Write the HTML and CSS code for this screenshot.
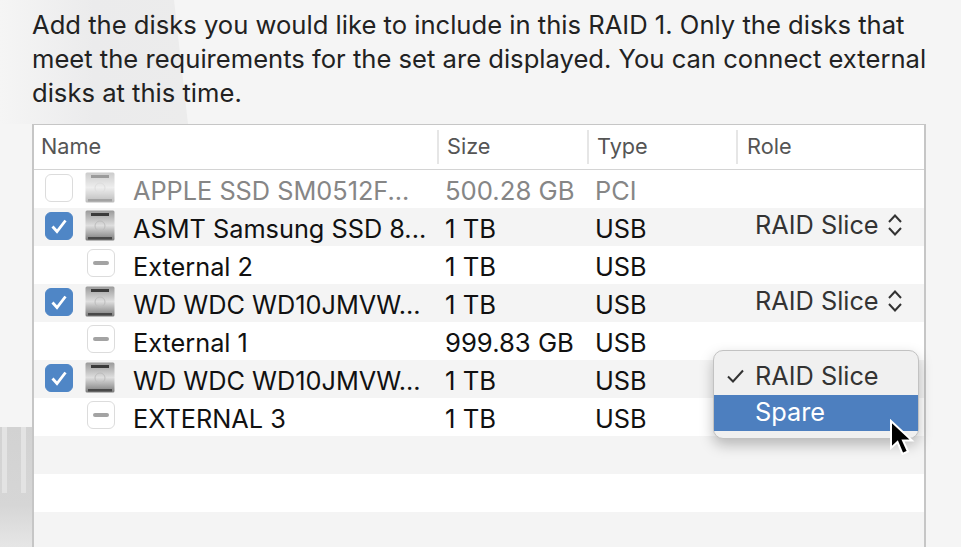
FILE: index.html
```html
<!DOCTYPE html>
<html lang="en">
<head>
    <meta charset="UTF-8">
    <title>RAID Assistant</title>
    <link rel="stylesheet" href="styles.css">
</head>
<body>
    <svg class="backdrop" width="961" height="547" viewBox="0 0 961 547">
        <defs>
            <linearGradient id="wedge" x1="0" y1="0" x2="1" y2="0">
                <stop offset="0" stop-color="#f5f5f5"/>
                <stop offset="0.5" stop-color="#ebebec"/>
                <stop offset="1" stop-color="#ececec"/>
            </linearGradient>
            <linearGradient id="stand" x1="0" y1="0" x2="0" y2="1">
                <stop offset="0" stop-color="#d2d2d2"/>
                <stop offset="0.65" stop-color="#d6d6d6"/>
                <stop offset="1" stop-color="#e6e6e6"/>
            </linearGradient>
            <linearGradient id="platter" x1="0" y1="0" x2="0" y2="1">
                <stop offset="0" stop-color="#9a9a9a"/>
                <stop offset="0.5" stop-color="#dedede"/>
                <stop offset="1" stop-color="#7a7a7a"/>
            </linearGradient>
            <g id="hd">
                <rect x="0.5" y="0.5" width="29" height="30" rx="1.5" fill="url(#platter)"/>
                <rect x="6" y="3" width="18" height="3" fill="#3a3a3a"/>
                <circle cx="15" cy="16" r="5" fill="none" stroke="#bdbdbd" stroke-width="1"/>
                <rect x="3" y="27" width="24" height="2.5" fill="#484848"/>
            </g>
        </defs>
        <path d="M0 0H174L188 124H0Z" fill="url(#wedge)"/>
        <rect x="0" y="427" width="32" height="120" fill="url(#stand)"/>
        <rect x="2" y="427" width="5" height="66" fill="#e3e3e3"/>
        <rect x="21" y="427" width="5" height="66" fill="#e3e3e3"/>
    </svg>

    <p class="intro">Add the disks you would like to include in this RAID 1. Only the disks that meet the requirements for the set are displayed. You can connect external disks at this time.</p>

    <div class="table">
        <div class="head">
            <div class="head-cell">Name</div>
            <div class="head-cell">Size</div>
            <div class="head-cell">Type</div>
            <div class="head-cell">Role</div>
        </div>

        <div class="row disabled">
            <div class="name"><span class="check"></span><svg class="disk" viewBox="0 0 30 31"><use href="#hd"/></svg><span>APPLE SSD SM0512F...</span></div>
            <div class="size">500.28 GB</div>
            <div class="type">PCI</div>
            <div class="role"></div>
        </div>
        <div class="row">
            <div class="name"><span class="check on"><svg width="18" height="16" viewBox="0 0 18 16"><path d="M2.5 8.5L7 13.5L15.5 2.5" fill="none" stroke="#fff" stroke-width="2.8"/></svg></span><svg class="disk dark" viewBox="0 0 30 31"><use href="#hd"/></svg><span>ASMT Samsung SSD 8...</span></div>
            <div class="size">1 TB</div>
            <div class="type">USB</div>
            <div class="role">RAID Slice <svg class="updown" width="16" height="24" viewBox="0 0 16 24"><path d="M2 9L8 2.5L14 9M2 15L8 21.5L14 15" fill="none" stroke="#333" stroke-width="2"/></svg></div>
        </div>
        <div class="row">
            <div class="name sub"><span class="check minus"><i></i></span><span>External 2</span></div>
            <div class="size">1 TB</div>
            <div class="type">USB</div>
            <div class="role"></div>
        </div>
        <div class="row">
            <div class="name"><span class="check on"><svg width="18" height="16" viewBox="0 0 18 16"><path d="M2.5 8.5L7 13.5L15.5 2.5" fill="none" stroke="#fff" stroke-width="2.8"/></svg></span><svg class="disk dark" viewBox="0 0 30 31"><use href="#hd"/></svg><span>WD WDC WD10JMVW...</span></div>
            <div class="size">1 TB</div>
            <div class="type">USB</div>
            <div class="role">RAID Slice <svg class="updown" width="16" height="24" viewBox="0 0 16 24"><path d="M2 9L8 2.5L14 9M2 15L8 21.5L14 15" fill="none" stroke="#333" stroke-width="2"/></svg></div>
        </div>
        <div class="row">
            <div class="name sub"><span class="check minus"><i></i></span><span>External 1</span></div>
            <div class="size">999.83 GB</div>
            <div class="type">USB</div>
            <div class="role"></div>
        </div>
        <div class="row">
            <div class="name"><span class="check on"><svg width="18" height="16" viewBox="0 0 18 16"><path d="M2.5 8.5L7 13.5L15.5 2.5" fill="none" stroke="#fff" stroke-width="2.8"/></svg></span><svg class="disk dark" viewBox="0 0 30 31"><use href="#hd"/></svg><span>WD WDC WD10JMVW...</span></div>
            <div class="size">1 TB</div>
            <div class="type">USB</div>
            <div class="role"></div>
        </div>
        <div class="row">
            <div class="name sub"><span class="check minus"><i></i></span><span>EXTERNAL 3</span></div>
            <div class="size">1 TB</div>
            <div class="type">USB</div>
            <div class="role"></div>
        </div>
        <div class="row"></div>
        <div class="row"></div>
        <div class="row"></div>

        <div class="menu">
            <div class="menu-item first"><svg class="tick" width="20" height="16" viewBox="0 0 20 16"><path d="M2 8.5L7 13.5L17 2.5" fill="none" stroke="#333" stroke-width="2"/></svg>RAID Slice</div>
            <div class="menu-item active">Spare</div>
        </div>
        <svg class="cursor" width="30" height="38" viewBox="0 0 30 38">
            <path d="M3 2V29L9.5 23L14.5 35L20 32.5L15 21.5H24Z" fill="#000" stroke="#fff" stroke-width="2"/>
        </svg>
    </div>
</body>
</html>
```

FILE: styles.css
```css
body {
    margin: 0;
    width: 961px;
    height: 547px;
    overflow: hidden;
    position: relative;
    background: #f5f5f5;
    font-family: Inter, "Liberation Sans", sans-serif;
    color: #111;
}

.backdrop {
    position: absolute;
    left: 0;
    top: 0;
}

.intro {
    position: relative;
    margin: 0;
    padding: 8px 30px 0 32px;
    height: 124px;
    box-sizing: border-box;
    font-size: 25.6px;
    line-height: 34px;
    color: #222;
}

.table {
    position: relative;
    margin-left: 32px;
    width: 894px;
    height: 423px;
    box-sizing: border-box;
    background: #fff;
    border: 1px solid #c6c6c6;
    border-right-width: 2px;
    border-left-width: 2px;
    border-bottom: 0;
}

.head {
    display: grid;
    grid-template-columns: 403px 150px 149px 1fr;
    height: 44px;
    border-bottom: 1px solid #d4d4d4;
    font-size: 21.7px;
    color: #555;
}

.head-cell {
    display: flex;
    align-items: center;
    padding: 0 0 2px 8px;
    margin: 5px 0;
    border-left: 2px solid #e6e6e6;
}

.head-cell:first-child {
    border-left: 0;
    padding-left: 7px;
}

.head-cell:last-child {
    padding-left: 9px;
}

.row {
    display: grid;
    grid-template-columns: 403px 150px 149px 1fr;
    height: 38px;
    align-items: center;
    font-size: 25.3px;
}

.row:nth-child(odd) {
    background: #f4f4f4;
}

.row.disabled {
    color: #868686;
}

.name {
    display: flex;
    align-items: center;
    padding: 2px 0 0 11px;
}

.name.sub {
    padding-left: 53px;
}

.check {
    width: 28px;
    height: 28px;
    box-sizing: border-box;
    flex: none;
    display: flex;
    align-items: center;
    justify-content: center;
    margin-bottom: 6px;
    background: #fff;
    border: 1px solid #dcdcdc;
    border-radius: 6px;
}

.check.on {
    background: #4f86c6;
    border-color: #4f86c6;
}

.check i {
    width: 16px;
    height: 4px;
    border-radius: 2px;
    background: #a3a3a3;
}

.disk {
    width: 30px;
    height: 31px;
    margin: 0 18px 6px 12px;
    flex: none;
    opacity: 0.5;
}

.disk.dark {
    opacity: 1;
}

.name.sub .check {
    margin-right: 18px;
}

.size {
    padding: 2px 0 0 8px;
    font-size: 25.7px;
}

.type {
    padding: 2px 0 0 8px;
}

.role {
    display: flex;
    align-items: center;
    justify-content: space-between;
    padding: 0 21px 6px 19px;
    color: #333;
}

.menu {
    position: absolute;
    left: 679px;
    top: 225px;
    width: 206px;
    height: 89px;
    box-sizing: border-box;
    padding-top: 8px;
    background: #f0f0f0;
    border: 1px solid #c2c2c2;
    border-radius: 10px;
    box-shadow: 0 6px 14px rgba(0,0,0,0.25);
    font-size: 25.3px;
    color: #333;
}

.menu-item {
    position: relative;
    height: 36px;
    box-sizing: border-box;
    display: flex;
    align-items: center;
    padding: 0 0 4px 41px;
}

.menu-item.active {
    background: #4d7fbf;
    color: #fff;
}

.tick {
    position: absolute;
    left: 12px;
    top: 9px;
}

.cursor {
    position: absolute;
    left: 854px;
    top: 294px;
}
```
